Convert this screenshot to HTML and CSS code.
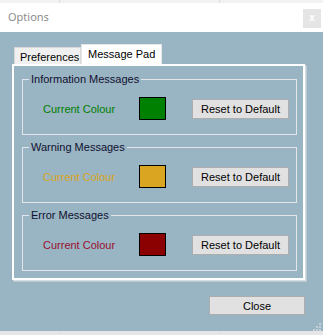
FILE: index.html
```html
<!DOCTYPE html>
<html lang="en">

<head>
    <meta charset="UTF-8">
    <meta name="viewport" content="width=device-width, initial-scale=1.0">
    <title>Options</title>
    <link rel="stylesheet" href="styles.css">
</head>

<body>
    <div class="window">
        <!-- strip of the window behind -->
        <div class="strip"><span></span><span></span><span></span></div>

        <!-- title bar -->
        <div class="titlebar">
            <span class="title">Options</span>
            <a href="#" class="closeBox">x</a>
        </div>

        <div class="client">
            <!-- tabs -->
            <ul class="tabs">
                <li class="tab">Preferences</li>
                <li class="tab active">Message Pad</li>
            </ul>

            <!-- tab page -->
            <div class="page">
                <fieldset class="group">
                    <legend>Information Messages</legend>
                    <div class="row">
                        <span class="label info">Current Colour</span>
                        <span class="swatch info"></span>
                        <button class="btn reset">Reset to Default</button>
                    </div>
                </fieldset>
                <fieldset class="group">
                    <legend>Warning Messages</legend>
                    <div class="row">
                        <span class="label warn">Current Colour</span>
                        <span class="swatch warn"></span>
                        <button class="btn reset">Reset to Default</button>
                    </div>
                </fieldset>
                <fieldset class="group">
                    <legend>Error Messages</legend>
                    <div class="row">
                        <span class="label error">Current Colour</span>
                        <span class="swatch error"></span>
                        <button class="btn reset">Reset to Default</button>
                    </div>
                </fieldset>
            </div>

            <div class="footer">
                <button class="btn close">Close</button>
            </div>

            <!-- size grip -->
            <div class="grip">
                <svg width="9" height="9" viewBox="0 0 9 9">
                    <rect x="7" y="1" width="2" height="2" fill="#c4d0d7"/>
                    <rect x="4" y="4" width="2" height="2" fill="#c4d0d7"/>
                    <rect x="7" y="4" width="2" height="2" fill="#c4d0d7"/>
                    <rect x="1" y="7" width="2" height="2" fill="#c4d0d7"/>
                    <rect x="4" y="7" width="2" height="2" fill="#c4d0d7"/>
                    <rect x="7" y="7" width="2" height="2" fill="#c4d0d7"/>
                </svg>
            </div>
        </div>

        <div class="strip bottom"><span></span><span></span><span></span></div>
    </div>
</body>

</html>
```

FILE: styles.css
```css
/* reset */
* {
    margin: 0;
    box-sizing: border-box;
}

ul {
    list-style: none;
    padding: 0;
}

body {
    font-family: "Liberation Sans", Arial, sans-serif;
    font-size: 11px;
    color: #000;
}

.window {
    width: 323px;
    height: 335px;
    overflow: hidden;
}

/* strips of the windows behind */
.strip {
    display: flex;
    height: 3px;
    background: #f2f2f2;
}

.strip span {
    width: 60px;
    border-right: 1px solid #dedede;
}

.strip span:nth-child(2) {
    width: 160px;
}

.strip span:last-child {
    flex: 1;
    border-right: none;
}

.strip.bottom {
    height: 4px;
    background: #e6e6e6;
}

/* title bar */
.titlebar {
    display: flex;
    justify-content: space-between;
    height: 29px;
    padding: 0 2px 0 8px;
    background: #fff;
}

.title {
    font-family: "Noto Sans", sans-serif;
    font-size: 11px;
    line-height: 15px;
    margin-top: 6px;
    color: #8c8c8c;
}

.closeBox {
    width: 18px;
    height: 19px;
    margin-top: 6px;
    background: #e5e5e5;
    color: #fff;
    text-align: center;
    text-decoration: none;
    font-size: 10px;
    line-height: 18px;
    font-weight: bold;
}

/* client area */
.client {
    height: 299px;
    padding: 12px 0 0 12px;
    background: #99b4c2;
}

/* tabs */
.tabs {
    display: flex;
    align-items: flex-end;
    height: 20px;
}

.tab {
    width: 67px;
    height: 17px;
    margin-left: 2px;
    padding: 2px 0 0 5px;
    line-height: 14px;
    background: #f0f0f0;
    border: 1px solid #d9d9d9;
    border-bottom: none;
}

.tab.active {
    width: 81px;
    height: 20px;
    margin-left: 0;
    padding-left: 6px;
    background: #fff;
    border-color: #e6e6e6;
}

/* tab page */
.page {
    display: flex;
    flex-direction: column;
    gap: 5px;
    width: 293px;
    height: 216px;
    padding: 6px 6px 7px 8px;
    border: 2px solid #fff;
    box-shadow: 1px 1px 0 #d3dde2, 2px 2px 0 #b9cad3;
}

.group {
    height: 63px;
    padding: 0;
    border: 1px solid #e2e6e8;
}

.group legend {
    margin-left: 6px;
    padding: 0 2px;
    line-height: 14px;
    color: #101030;
}

.row {
    display: flex;
    align-items: center;
    height: 23px;
    margin-top: 11px;
    padding-left: 20px;
}

.label {
    width: 96px;
}

.label.info {
    color: #008000;
}

.label.warn {
    color: #daa520;
}

.label.error {
    color: #9b1030;
}

.swatch {
    width: 27px;
    height: 23px;
    margin-right: 26px;
    border: 1px solid #000;
}

.swatch.info {
    background: #008000;
}

.swatch.warn {
    background: #daa520;
}

.swatch.error {
    background: #8b0000;
}

/* buttons */
.btn {
    font-family: "Liberation Sans", Arial, sans-serif;
    font-size: 11px;
    color: #000;
    background: #e1e1e1;
    border: 1px solid #adadad;
    padding: 0;
}

.btn.reset {
    width: 97px;
    height: 20px;
}

.footer {
    display: flex;
    justify-content: flex-end;
    margin-top: 16px;
    padding-right: 18px;
}

.btn.close {
    width: 96px;
    height: 19px;
}

.grip {
    display: flex;
    justify-content: flex-end;
    height: 9px;
    margin-top: 7px;
    padding-right: 2px;
}

.grip svg {
    display: block;
}
```
